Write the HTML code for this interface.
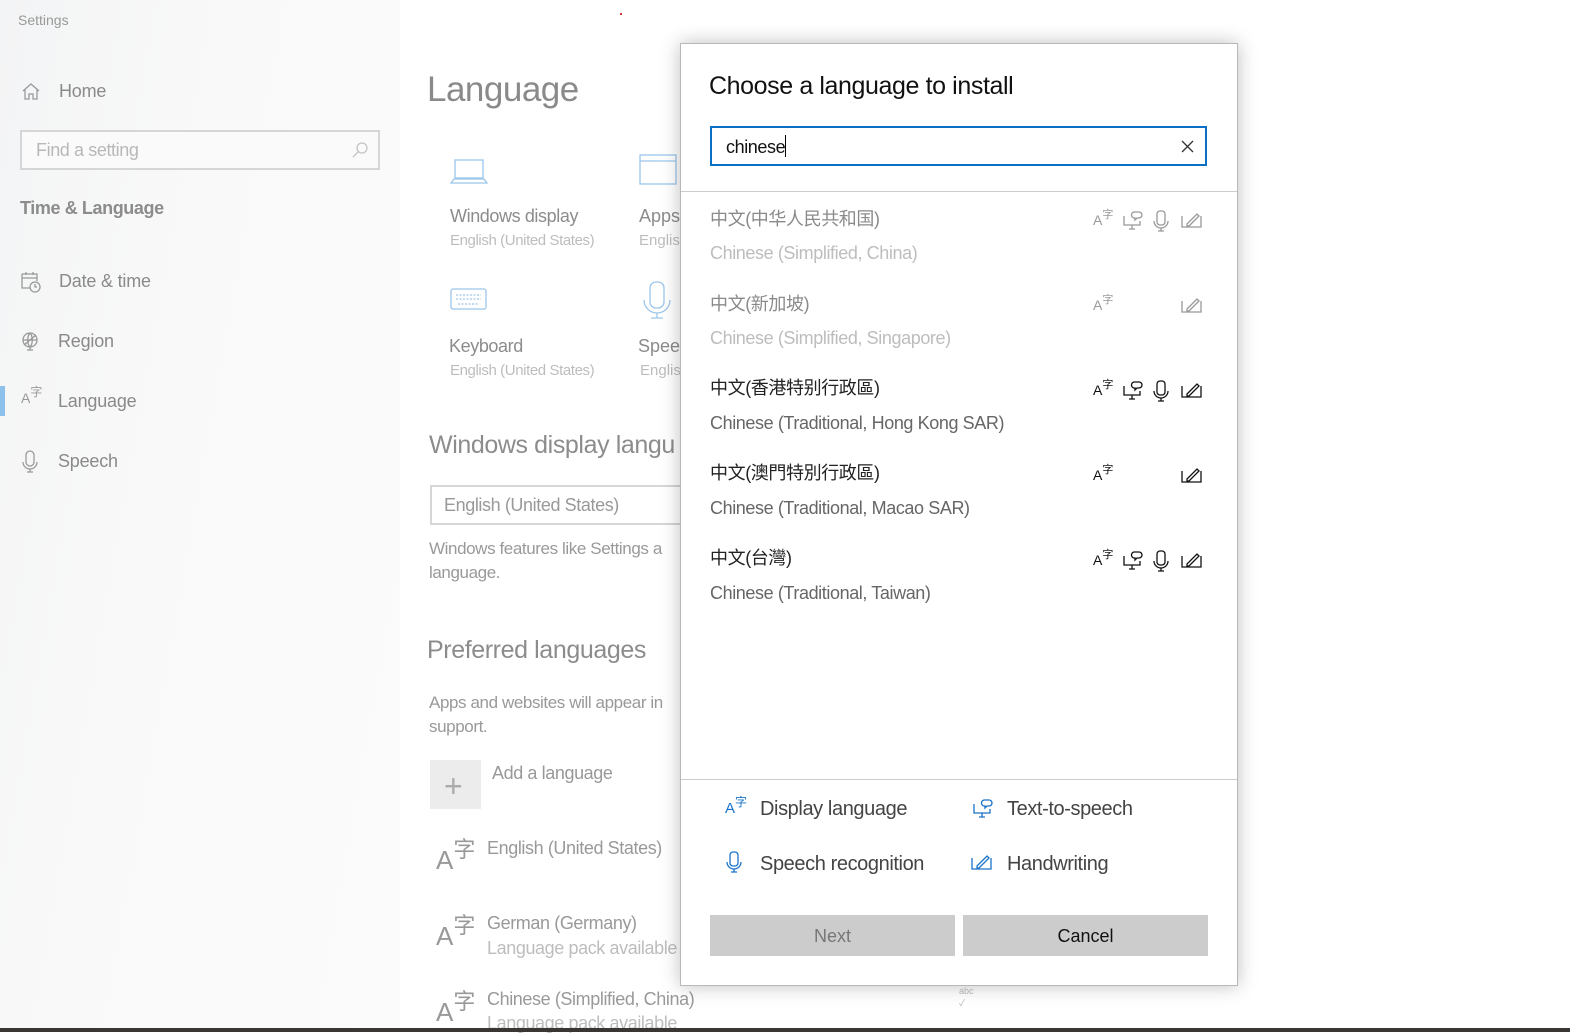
<!DOCTYPE html>
<html><head><meta charset="utf-8"><style>
*{margin:0;padding:0;box-sizing:border-box}
body{width:1570px;height:1032px;position:relative;overflow:hidden;background:#fff;font-family:"Liberation Sans","Noto Sans CJK SC",sans-serif;}
.a{position:absolute;white-space:nowrap}
.side{position:absolute;left:0;top:0;width:400px;height:1028px;background:linear-gradient(100deg,#f3f4f5 0%,#f9f9f9 40%,#fbfbfb 100%)}
.nav{font-size:18px;color:#8a8a8a;letter-spacing:-0.2px}
svg{position:absolute;fill:none;stroke-width:1.3}
.lg{color:#bdbdbd}
.t{letter-spacing:-0.4px}
.dlg{position:absolute;left:680px;top:43px;width:558px;height:943px;background:#fff;border:1px solid #b8b8b8;box-shadow:0 0 18px rgba(0,0,0,.25)}
</style></head><body>
<div class="side"></div>
<div class="a" style="left:18px;top:12px;font-size:14px;color:#999">Settings</div>
<svg style="left:21px;top:81px" width="20" height="20" viewBox="0 0 20 20" stroke="#999"><path d="M2 10L10 3l8 7M4 8.5V18h4v-5h4v5h4V8.5"/></svg>
<div class="a nav" style="left:59px;top:81px">Home</div>
<div class="a" style="left:20px;top:130px;width:360px;height:40px;border:2px solid #d6d6d6;background:#fafafa"></div>
<div class="a t" style="left:36px;top:140px;font-size:18px;color:#b8b8b8">Find a setting</div>
<svg style="left:350px;top:140px" width="20" height="20" viewBox="0 0 20 20" stroke="#c4c4c4"><circle cx="12" cy="8" r="5"/><path d="M8.5 11.5L3 17"/></svg>
<div class="a t" style="left:20px;top:198px;font-size:18px;font-weight:bold;color:#8c8c8c">Time &amp; Language</div>
<svg style="left:21px;top:271px" width="20" height="22" viewBox="0 0 20 22" stroke="#999"><path d="M1 3h15v7M1 3v14h8M1 7h15M5 1v3M12 1v3"/><circle cx="14" cy="16" r="5"/><path d="M14 13v3h2"/></svg>
<div class="a nav" style="left:59px;top:271px">Date &amp; time</div>
<svg style="left:21px;top:331px" width="20" height="22" viewBox="0 0 20 22" stroke="#999"><circle cx="9" cy="9" r="7"/><path d="M2 9h14M9 2c3 3 3 11 0 14M9 2c-3 3-3 11 0 14M3 14l12-10M9 16v3M6 19h6"/></svg>
<div class="a nav" style="left:58px;top:331px">Region</div>
<div class="a" style="left:0;top:386px;width:5px;height:30px;background:#8dc0ea"></div>
<div class="a" style="left:21px;top:390px;font-size:14px;color:#999">A<span style="font-size:12px;position:relative;top:-7px">字</span></div>
<div class="a nav" style="left:58px;top:391px">Language</div>
<svg style="left:21px;top:450px" width="20" height="24" viewBox="0 0 20 24" stroke="#999"><rect x="5" y="1" width="8" height="15" rx="4"/><path d="M2 12a7 7 0 0 0 14 0M9 19v3M6 22h6"/></svg>
<div class="a nav" style="left:58px;top:451px">Speech</div>

<div class="a" style="left:620px;top:13px;width:2px;height:2px;background:#c33"></div>
<div class="a" style="left:427px;top:70px;font-size:35px;color:#8a8a8a;letter-spacing:-0.5px">Language</div>
<svg style="left:450px;top:158px" width="40" height="30" viewBox="0 0 40 30" stroke="#9cc6ea" stroke-width="2.2"><rect x="5" y="2" width="28" height="18"/><path d="M1 25h36l-3-4H4z"/></svg>
<div class="a t" style="left:450px;top:206px;font-size:18px;color:#8c8c8c">Windows display</div>
<div class="a lg t" style="left:450px;top:232px;font-size:15px">English (United States)</div>
<svg style="left:638px;top:153px" width="42" height="34" viewBox="0 0 42 34" stroke="#9cc6ea" stroke-width="2.2"><rect x="2" y="2" width="36" height="29"/><path d="M2 8h36"/></svg>
<div class="a" style="left:639px;top:206px;font-size:18px;color:#8c8c8c">Apps</div>
<div class="a lg" style="left:639px;top:232px;font-size:15px">Englis</div>
<svg style="left:450px;top:288px" width="38" height="24" viewBox="0 0 38 24" stroke="#9cc6ea" stroke-width="2"><rect x="1" y="1" width="35" height="20" rx="2"/><path d="M6 7h25M6 11h25M8 16h21" stroke-dasharray="2 1.5"/></svg>
<div class="a t" style="left:449px;top:336px;font-size:18px;color:#8c8c8c">Keyboard</div>
<div class="a lg t" style="left:450px;top:362px;font-size:15px">English (United States)</div>
<svg style="left:642px;top:280px" width="38" height="42" viewBox="0 0 38 42" stroke="#9cc6ea" stroke-width="2.2"><rect x="8" y="2" width="14" height="26" rx="6"/><path d="M2 20a13 13 0 0 0 26 0M15 33v5M9 38h12"/></svg>
<div class="a" style="left:638px;top:336px;font-size:18px;color:#8c8c8c">Speec</div>
<div class="a lg" style="left:640px;top:362px;font-size:15px">Englis</div>
<div class="a t" style="left:429px;top:431px;font-size:25px;color:#8c8c8c">Windows display langu</div>
<div class="a" style="left:430px;top:485px;width:260px;height:40px;border:2px solid #d6d6d6"></div>
<div class="a t" style="left:444px;top:495px;font-size:18px;color:#999">English (United States)</div>
<div class="a t" style="left:429px;top:537px;font-size:17px;color:#999;line-height:24px">Windows features like Settings a<br>language.</div>
<div class="a t" style="left:427px;top:636px;font-size:25px;color:#8c8c8c">Preferred languages</div>
<div class="a t" style="left:429px;top:691px;font-size:17px;color:#999;line-height:24px">Apps and websites will appear in<br>support.</div>
<div class="a" style="left:430px;top:760px;width:51px;height:49px;background:#ececec"></div>
<div class="a" style="left:444px;top:768px;font-size:32px;color:#aaa;font-weight:200">+</div>
<div class="a t" style="left:492px;top:763px;font-size:18px;color:#999">Add a language</div>
<div class="a" style="left:436px;top:844px;font-size:26px;color:#999">A<span style="font-size:22px;position:relative;top:-12px">字</span></div>
<div class="a t" style="left:487px;top:838px;font-size:18px;color:#999">English (United States)</div>
<div class="a" style="left:436px;top:920px;font-size:26px;color:#999">A<span style="font-size:22px;position:relative;top:-12px">字</span></div>
<div class="a t" style="left:487px;top:913px;font-size:18px;color:#999">German (Germany)</div>
<div class="a lg t" style="left:487px;top:938px;font-size:18px">Language pack available</div>
<div class="a" style="left:436px;top:996px;font-size:26px;color:#999">A<span style="font-size:22px;position:relative;top:-12px">字</span></div>
<div class="a t" style="left:487px;top:989px;font-size:18px;color:#999">Chinese (Simplified, China)</div>
<div class="a lg t" style="left:487px;top:1013px;font-size:18px">Language pack available</div>
<div class="a" style="left:959px;top:986px;font-size:9px;color:#bbb">abc<br>✓</div>
<div class="a" style="left:0;top:1028px;width:1570px;height:4px;background:#3a3633"></div>

<div class="dlg"></div>
<div class="a t" style="left:709px;top:72px;font-size:25px;color:#111">Choose a language to install</div>
<div class="a" style="left:710px;top:126px;width:497px;height:40px;border:2px solid #0b6fc4"></div>
<div class="a t" style="left:726px;top:135px;font-size:18px;color:#111">chinese<span style="display:inline-block;width:1px;height:22px;background:#000;vertical-align:-4px"></span></div>
<svg style="left:1180px;top:139px" width="15" height="15" viewBox="0 0 15 15" stroke="#333"><path d="M2 2l11 11M13 2L2 13"/></svg>
<div class="a" style="left:681px;top:191px;width:556px;height:1px;background:#ccc"></div>

<div class="a t" style="left:710px;top:205px;font-size:18px;color:#8a8a8a">中文(中华人民共和国)</div>
<div class="a lg t" style="left:710px;top:243px;font-size:18px">Chinese (Simplified, China)</div>
<div class="a t" style="left:710px;top:290px;font-size:18px;color:#8a8a8a">中文(新加坡)</div>
<div class="a lg t" style="left:710px;top:328px;font-size:18px">Chinese (Simplified, Singapore)</div>
<div class="a t" style="left:710px;top:374px;font-size:18px;color:#222">中文(香港特别行政區)</div>
<div class="a t" style="left:710px;top:413px;font-size:18px;color:#666">Chinese (Traditional, Hong Kong SAR)</div>
<div class="a t" style="left:710px;top:459px;font-size:18px;color:#222">中文(澳門特別行政區)</div>
<div class="a t" style="left:710px;top:498px;font-size:18px;color:#666">Chinese (Traditional, Macao SAR)</div>
<div class="a t" style="left:710px;top:544px;font-size:18px;color:#222">中文(台灣)</div>
<div class="a t" style="left:710px;top:583px;font-size:18px;color:#666">Chinese (Traditional, Taiwan)</div>

<div class="a" style="left:1093px;top:212px;font-size:14px;color:#999">A<span style="font-size:11px;position:relative;top:-7px">字</span></div>
<svg style="left:1122px;top:210px" width="22" height="22" viewBox="0 0 22 22" stroke="#999"><path d="M2 6v9h16v-4M10 15v4M7 19h6"/><path d="M12 2h5a3 3 0 0 1 0 6h-2l-2 2v-2a3 3 0 0 1-1-6z"/></svg>
<svg style="left:1152px;top:210px" width="18" height="24" viewBox="0 0 18 24" stroke="#999"><rect x="5" y="1" width="8" height="14" rx="3"/><path d="M2 11a7 7 0 0 0 14 0M9 18v3M6 21h6"/></svg>
<svg style="left:1181px;top:210px" width="22" height="20" viewBox="0 0 22 20" stroke="#999"><path d="M1 6v11h19V6"/><path d="M6 14l10-10 2 2-10 10H6z"/></svg>

<div class="a" style="left:1093px;top:297px;font-size:14px;color:#999">A<span style="font-size:11px;position:relative;top:-7px">字</span></div>
<svg style="left:1181px;top:295px" width="22" height="20" viewBox="0 0 22 20" stroke="#999"><path d="M1 6v11h19V6"/><path d="M6 14l10-10 2 2-10 10H6z"/></svg>

<div class="a" style="left:1093px;top:382px;font-size:14px;color:#111">A<span style="font-size:11px;position:relative;top:-7px">字</span></div>
<svg style="left:1122px;top:380px" width="22" height="22" viewBox="0 0 22 22" stroke="#111"><path d="M2 6v9h16v-4M10 15v4M7 19h6"/><path d="M12 2h5a3 3 0 0 1 0 6h-2l-2 2v-2a3 3 0 0 1-1-6z"/></svg>
<svg style="left:1152px;top:380px" width="18" height="24" viewBox="0 0 18 24" stroke="#111"><rect x="5" y="1" width="8" height="14" rx="3"/><path d="M2 11a7 7 0 0 0 14 0M9 18v3M6 21h6"/></svg>
<svg style="left:1181px;top:380px" width="22" height="20" viewBox="0 0 22 20" stroke="#111"><path d="M1 6v11h19V6"/><path d="M6 14l10-10 2 2-10 10H6z"/></svg>

<div class="a" style="left:1093px;top:467px;font-size:14px;color:#111">A<span style="font-size:11px;position:relative;top:-7px">字</span></div>
<svg style="left:1181px;top:465px" width="22" height="20" viewBox="0 0 22 20" stroke="#111"><path d="M1 6v11h19V6"/><path d="M6 14l10-10 2 2-10 10H6z"/></svg>

<div class="a" style="left:1093px;top:552px;font-size:14px;color:#111">A<span style="font-size:11px;position:relative;top:-7px">字</span></div>
<svg style="left:1122px;top:550px" width="22" height="22" viewBox="0 0 22 22" stroke="#111"><path d="M2 6v9h16v-4M10 15v4M7 19h6"/><path d="M12 2h5a3 3 0 0 1 0 6h-2l-2 2v-2a3 3 0 0 1-1-6z"/></svg>
<svg style="left:1152px;top:550px" width="18" height="24" viewBox="0 0 18 24" stroke="#111"><rect x="5" y="1" width="8" height="14" rx="3"/><path d="M2 11a7 7 0 0 0 14 0M9 18v3M6 21h6"/></svg>
<svg style="left:1181px;top:550px" width="22" height="20" viewBox="0 0 22 20" stroke="#111"><path d="M1 6v11h19V6"/><path d="M6 14l10-10 2 2-10 10H6z"/></svg>

<div class="a" style="left:681px;top:779px;width:556px;height:1px;background:#ccc"></div>
<div class="a" style="left:725px;top:800px;font-size:15px;color:#1a73c8">A<span style="font-size:12px;position:relative;top:-7px">字</span></div>
<div class="a t" style="left:760px;top:798px;font-size:20px;color:#444">Display language</div>
<svg style="left:971px;top:798px" width="24" height="22" viewBox="0 0 22 22" stroke="#1a73c8" stroke-width="1.6"><path d="M2 6v9h16v-4M10 15v4M7 19h6"/><path d="M12 2h5a3 3 0 0 1 0 6h-2l-2 2v-2a3 3 0 0 1-1-6z"/></svg>
<div class="a t" style="left:1007px;top:798px;font-size:20px;color:#444">Text-to-speech</div>
<svg style="left:725px;top:851px" width="18" height="24" viewBox="0 0 18 24" stroke="#1a73c8" stroke-width="1.6"><rect x="5" y="1" width="8" height="14" rx="3"/><path d="M2 11a7 7 0 0 0 14 0M9 18v3M6 21h6"/></svg>
<div class="a t" style="left:760px;top:853px;font-size:20px;color:#444">Speech recognition</div>
<svg style="left:971px;top:852px" width="22" height="20" viewBox="0 0 22 20" stroke="#1a73c8" stroke-width="1.6"><path d="M1 6v11h19V6"/><path d="M6 14l10-10 2 2-10 10H6z"/></svg>
<div class="a t" style="left:1007px;top:853px;font-size:20px;color:#444">Handwriting</div>

<div class="a" style="left:710px;top:915px;width:245px;height:41px;background:#cccccc;color:#777;font-size:18px;text-align:center;line-height:42px">Next</div>
<div class="a" style="left:963px;top:915px;width:245px;height:41px;background:#cccccc;color:#111;font-size:18px;text-align:center;line-height:42px">Cancel</div>
</body></html>
